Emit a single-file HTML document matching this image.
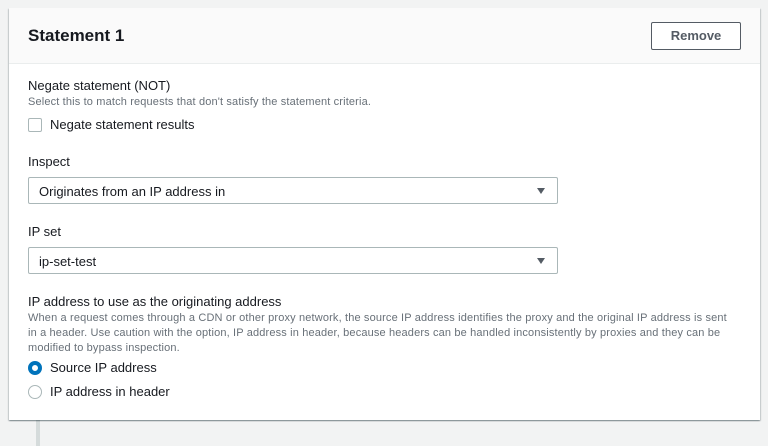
<!DOCTYPE html>
<html><head><meta charset="utf-8"><style>
*{margin:0;padding:0;box-sizing:border-box}
body{width:768px;height:446px;background:#f2f3f3;font-family:"Liberation Sans",sans-serif;color:#16191f;position:relative;overflow:hidden}
.a{position:absolute;white-space:nowrap}
.panel{position:absolute;left:9px;top:8px;width:751px;height:412px;background:#fff;box-shadow:0 1px 1px rgba(0,28,36,.3),1px 1px 1px rgba(0,28,36,.15),-1px 1px 1px rgba(0,28,36,.15)}
.hdr{position:absolute;left:0;top:0;width:751px;height:56px;background:#fafafa;border-bottom:1px solid #eaeded}
.lbl{font-size:13px;color:#16191f}
.hint{font-size:11px;letter-spacing:0.15px;color:#687078}
.sel{position:absolute;left:28px;width:530px;height:27px;border:1px solid #aab7b8;border-radius:2px;background:#fff;font-size:13px;padding:6px 0 0 10px}
.tri{position:absolute;right:12px;top:10px;width:0;height:0;border-left:4px solid transparent;border-right:4px solid transparent;border-top:6px solid #545b64}
</style></head><body>
<div style="position:absolute;left:36px;top:420px;width:4px;height:26px;background:#d5dbdb"></div>
<div class="panel"><div class="hdr"></div></div>
<div class="a" style="left:28px;top:26px;font-size:17px;font-weight:bold">Statement 1</div>
<div class="a" style="left:651px;top:22px;width:90px;height:28px;border:1px solid #545b64;border-radius:2px;background:#fff;font-size:13px;font-weight:bold;color:#545b64;text-align:center;line-height:25px">Remove</div>
<div class="a lbl" style="left:28px;top:78px">Negate statement (NOT)</div>
<div class="a hint" style="left:28px;top:96px">Select this to match requests that don't satisfy the statement criteria.</div>
<div class="a" style="left:28px;top:118px;width:14px;height:14px;border:1px solid #aab7b8;border-radius:2px"></div>
<div class="a lbl" style="left:50px;top:117px">Negate statement results</div>
<div class="a lbl" style="left:28px;top:154px">Inspect</div>
<div class="sel" style="top:177px">Originates from an IP address in<div class="tri"></div></div>
<div class="a lbl" style="left:28px;top:224px">IP set</div>
<div class="sel" style="top:247px">ip-set-test<div class="tri"></div></div>
<div class="a lbl" style="left:28px;top:294px">IP address to use as the originating address</div>
<div class="a hint" style="left:28px;top:311px;line-height:15px">When a request comes through a CDN or other proxy network, the source IP address identifies the proxy and the original IP address is sent<br>in a header. Use caution with the option, IP address in header, because headers can be handled inconsistently by proxies and they can be<br>modified to bypass inspection.</div>
<div class="a" style="left:28px;top:361px;width:14px;height:14px;border-radius:50%;border:4px solid #0073bb;background:#fff"></div>
<div class="a lbl" style="left:50px;top:360px">Source IP address</div>
<div class="a" style="left:28px;top:385px;width:14px;height:14px;border-radius:50%;border:1px solid #aab7b8;background:#fff"></div>
<div class="a lbl" style="left:50px;top:384px">IP address in header</div>
</body></html>
